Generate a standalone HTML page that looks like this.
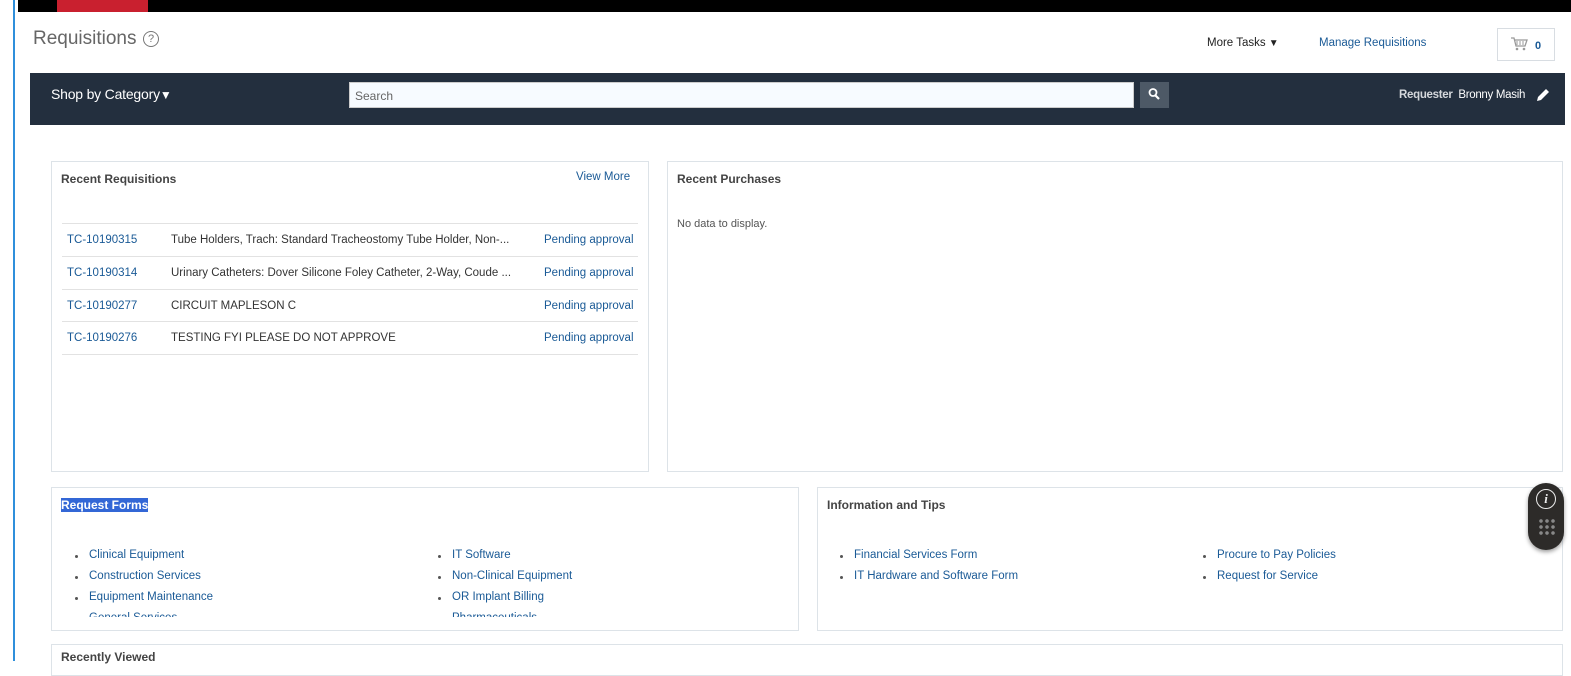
<!DOCTYPE html><html><head><style>
body{margin:0;width:1571px;height:661px;overflow:hidden;background:#fff;font-family:"Liberation Sans",Arial,sans-serif;position:relative}
.a{position:absolute}
a,.lk{color:#1a5a96;text-decoration:none}
.p{position:absolute;border:1px solid #dde3e8;background:#fff}
.h{position:absolute;font-size:12px;font-weight:bold;color:#444}
.row{position:absolute;left:10px;width:576px;height:32px;border-top:1px solid #e2e2e2;font-size:11.5px}
.row span{position:absolute;top:10px}
ul{margin:0;padding:0;list-style:none}
li{font-size:11.5px;color:#1a5a96;height:21px;position:relative;padding-left:14px;white-space:nowrap}
li:before{content:"";position:absolute;left:0;top:6px;width:3px;height:3px;background:#555;border-radius:50%}
</style></head><body>
<div class="a" style="left:13px;top:0;width:2px;height:661px;background:#2f8fdb"></div>
<div class="a" style="left:18px;top:0;width:1553px;height:12px;background:#000"></div>
<div class="a" style="left:57px;top:0;width:91px;height:12px;background:#c9202f"></div>
<div class="a" style="left:33px;top:28px;font-size:19px;color:#666">Requisitions</div>
<div class="a" style="left:143px;top:31px;width:14px;height:14px;border:1.3px solid #777;border-radius:50%;font-size:11px;color:#777;text-align:center;line-height:14px">?</div>
<div class="a" style="left:1207px;top:37px;font-size:11.5px;color:#222">More Tasks <span style="font-size:10px">▼</span></div>
<div class="a lk" style="left:1319px;top:37px;font-size:11.5px">Manage Requisitions</div>
<div class="a" style="left:1497px;top:28px;width:56px;height:31px;border:1px solid #d8dde2"></div>
<svg class="a" style="left:1510px;top:36px" width="18" height="16" viewBox="0 0 18 16"><path d="M1 2h3l2 8h9l2-6H5" fill="none" stroke="#999" stroke-width="1.3"/><path d="M7 5v4M10 5v4M13 5v4" stroke="#999"/><circle cx="7" cy="13" r="1.3" fill="#999"/><circle cx="14" cy="13" r="1.3" fill="#999"/></svg>
<div class="a" style="left:1535px;top:40px;font-size:11px;font-weight:bold;color:#1a5a96">0</div>
<div class="a" style="left:30px;top:73px;width:1535px;height:52px;background:#232f3e"></div>
<div class="a" style="left:51px;top:86px;font-size:14px;color:#fff;letter-spacing:-0.2px">Shop by Category<span style="font-size:12px">▼</span></div>
<div class="a" style="left:349px;top:82px;width:785px;height:26px;background:#f7fbff;border:1px solid #ccc;box-sizing:border-box;font-size:12px;color:#666;padding:6px 5px">Search</div>
<div class="a" style="left:1140px;top:82px;width:29px;height:26px;background:#4d5966"></div>
<svg class="a" style="left:1147px;top:87px" width="15" height="15" viewBox="0 0 15 15"><circle cx="6" cy="5.5" r="3.5" fill="none" stroke="#fff" stroke-width="1.8"/><path d="M8 8l4 4" stroke="#fff" stroke-width="2.2"/></svg>
<div class="a" style="left:1399px;top:89px;font-size:11.5px;letter-spacing:-0.3px"><b style="color:#d5d8dc">Requester</b>&nbsp; <span style="color:#fff">Bronny Masih</span></div>
<svg class="a" style="left:1535px;top:87px" width="16" height="16" viewBox="0 0 16 16"><path d="M2 14l1-4 8-8 3 3-8 8z" fill="#fff"/></svg>
<div class="p" style="left:51px;top:161px;width:596px;height:309px">
<div class="h" style="left:9px;top:10px">Recent Requisitions</div>
<div class="a lk" style="left:524px;top:9px;font-size:11.5px">View More</div>
<div class="row" style="top:61px"><span class="lk" style="left:5px">TC-10190315</span><span style="left:109px;color:#333">Tube Holders, Trach: Standard Tracheostomy Tube Holder, Non-...</span><span class="lk" style="left:482px">Pending approval</span></div>
<div class="row" style="top:94px"><span class="lk" style="left:5px">TC-10190314</span><span style="left:109px;color:#333">Urinary Catheters: Dover Silicone Foley Catheter, 2-Way, Coude ...</span><span class="lk" style="left:482px">Pending approval</span></div>
<div class="row" style="top:127px"><span class="lk" style="left:5px">TC-10190277</span><span style="left:109px;color:#333">CIRCUIT MAPLESON C</span><span class="lk" style="left:482px">Pending approval</span></div>
<div class="row" style="top:159px;border-bottom:1px solid #e2e2e2"><span class="lk" style="left:5px">TC-10190276</span><span style="left:109px;color:#333">TESTING FYI PLEASE DO NOT APPROVE</span><span class="lk" style="left:482px">Pending approval</span></div>
</div>
<div class="p" style="left:667px;top:161px;width:894px;height:309px">
<div class="h" style="left:9px;top:10px">Recent Purchases</div>
<div class="a" style="left:9px;top:56px;font-size:11px;color:#555">No data to display.</div>
</div>
<div class="p" style="left:51px;top:487px;width:746px;height:142px">
<div class="h" style="left:9px;top:10px;background:#3367d6;color:#fff">Request Forms</div>
<div class="a" style="left:0;top:55px;width:746px;height:74px;overflow:hidden">
<ul class="a" style="left:23px;top:6px"><li>Clinical Equipment</li><li>Construction Services</li><li>Equipment Maintenance</li><li>General Services</li></ul>
<ul class="a" style="left:386px;top:6px"><li>IT Software</li><li>Non-Clinical Equipment</li><li>OR Implant Billing</li><li>Pharmaceuticals</li></ul>
</div></div>
<div class="p" style="left:817px;top:487px;width:744px;height:142px">
<div class="h" style="left:9px;top:10px">Information and Tips</div>
<ul class="a" style="left:22px;top:61px"><li>Financial Services Form</li><li>IT Hardware and Software Form</li></ul>
<ul class="a" style="left:385px;top:61px"><li>Procure to Pay Policies</li><li>Request for Service</li></ul>
</div>
<div class="p" style="left:51px;top:644px;width:1510px;height:30px"><div class="h" style="left:9px;top:5px">Recently Viewed</div></div>
<div class="a" style="left:1528px;top:483px;width:36px;height:67px;background:#2d2b29;border-radius:18px;box-shadow:0 2px 4px rgba(0,0,0,.4)"></div>
<div class="a" style="left:1536px;top:489px;width:18px;height:18px;border:1.5px solid #eee;border-radius:50%;color:#eee;font:italic bold 13px 'Liberation Serif',serif;text-align:center;line-height:18px">i</div>
<div class="a" style="left:1538px;top:518px;width:18px;height:18px;background:radial-gradient(circle,#888 1.6px,transparent 2px) 0 0/6px 6px"></div>
</body></html>
